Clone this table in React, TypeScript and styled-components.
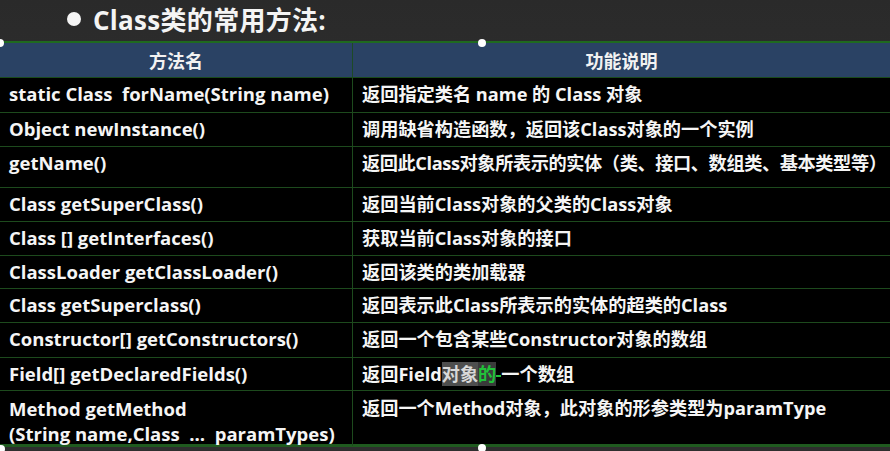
import React from "react";
import styled, { createGlobalStyle } from "styled-components";

const GlobalStyle = createGlobalStyle`
  html, body {
    margin: 0;
    padding: 0;
    background: #2c2c2c;
  }
  body {
    font-family: "Open Sans", "Noto Sans CJK SC", sans-serif;
  }
`;

const rows: { name: string; desc: string; h: number }[] = [
  { name: "static Class  forName(String name)", desc: "返回指定类名 name 的 Class 对象", h: 35 },
  { name: "Object newInstance()", desc: "调用缺省构造函数，返回该Class对象的一个实例", h: 34 },
  { name: "getName()", desc: "返回此Class对象所表示的实体（类、接口、数组类、基本类型等）", h: 41 },
  { name: "Class getSuperClass()", desc: "返回当前Class对象的父类的Class对象", h: 34 },
  { name: "Class [] getInterfaces()", desc: "获取当前Class对象的接口", h: 34 },
  { name: "ClassLoader getClassLoader()", desc: "返回该类的类加载器", h: 33 },
  { name: "Class getSuperclass()", desc: "返回表示此Class所表示的实体的超类的Class", h: 34 },
  { name: "Constructor[] getConstructors()", desc: "返回一个包含某些Constructor对象的数组", h: 35 },
  { name: "Field[] getDeclaredFields()", desc: "FIELD", h: 33 },
  {
    name: "Method getMethod\n(String name,Class  …  paramTypes)",
    desc: "返回一个Method对象，此对象的形参类型为paramType",
    h: 56,
  },
];

export default function App() {
  return (
    <Board>
      <GlobalStyle />
      <Title>
        <Bullet />
        Class类的常用方法:
      </Title>
      <Table>
        <HeadRow>
          <HeadCell>方法名</HeadCell>
          <HeadCell>功能说明</HeadCell>
        </HeadRow>
        {rows.map((r, i) => {
          const last = i === rows.length - 1;
          return (
            <Row key={i} $h={r.h} $last={last}>
              <NameCell $tall={last}>{r.name}</NameCell>
              <DescCell $tall={last} $tight={i === 2}>
                {r.desc === "FIELD" ? (
                  <>
                    返回Field<Selected>对象</Selected>
                    <Cursor>的</Cursor>
                    <Caret />一个数组
                  </>
                ) : (
                  r.desc
                )}
              </DescCell>
            </Row>
          );
        })}
      </Table>
      <Handle $x={0} $y={43} />
      <Handle $x={482} $y={43} />
      <Handle $x={482} $y={448} />
      <Handle $x={1} $y={449} />
    </Board>
  );
}

const Board = styled.div`
  position: relative;
  width: 890px;
  height: 451px;
  overflow: hidden;
  background: linear-gradient(180deg, #2a2a2a 0%, #333333 60%, #2e2e2e 100%);
`;

const Title = styled.div`
  height: 41px;
  display: flex;
  align-items: center;
  padding-left: 67px;
  padding-bottom: 3px;
  box-sizing: border-box;
  color: #f4f4f4;
  font-size: 26px;
  font-weight: 700;
  letter-spacing: 0.3px;
`;

const Bullet = styled.span`
  width: 14px;
  height: 14px;
  border-radius: 50%;
  background: #f4f4f4;
  margin-right: 12px;
`;

const Table = styled.div`
  display: flex;
  flex-direction: column;
  border-top: 2px solid #1f6a1f;
`;

const HeadRow = styled.div`
  display: grid;
  grid-template-columns: 352px 1fr;
  height: 34px;
  background: #2a4264;
  border-bottom: 1px solid #1a4a1a;
`;

const HeadCell = styled.div`
  display: flex;
  align-items: center;
  justify-content: center;
  color: #f2f2f2;
  font-size: 18px;
  font-weight: 700;
  & + & {
    border-left: 1px solid #1d4a26;
  }
`;

const Row = styled.div<{ $h: number; $last: boolean }>`
  display: grid;
  grid-template-columns: 352px 1fr;
  height: ${(p) => p.$h}px;
  box-sizing: border-box;
  background: #000;
  border-bottom: ${(p) => (p.$last ? "3px solid #1f5a1f" : "1px solid #1d4a1d")};
`;

const NameCell = styled.div<{ $tall: boolean }>`
  padding: 5px 0 0 9px;
  color: #f5f5f5;
  font-size: 18.5px;
  font-weight: 700;
  line-height: ${(p) => (p.$tall ? "25px" : "22px")};
  white-space: pre;
`;

const DescCell = styled.div<{ $tall: boolean; $tight: boolean }>`
  padding: 5px 0 0 9px;
  border-left: 1px solid #1d4a1d;
  color: #f5f5f5;
  font-size: 18.2px;
  font-weight: 700;
  line-height: ${(p) => (p.$tall ? "25px" : "22px")};
  letter-spacing: ${(p) => (p.$tight ? "-0.4px" : "0")};
  white-space: pre;
`;

const Selected = styled.span`
  background: #4e4e4e;
  color: #d8d8d8;
`;

const Cursor = styled.span`
  background: #3a3a3a;
  color: #22c23a;
`;

const Caret = styled.span`
  display: inline-block;
  width: 5px;
  height: 2px;
  background: #22c23a;
  vertical-align: middle;
`;

const Handle = styled.span<{ $x: number; $y: number }>`
  position: absolute;
  left: ${(p) => p.$x - 4}px;
  top: ${(p) => p.$y - 4}px;
  width: 8px;
  height: 8px;
  border-radius: 50%;
  background: #fff;
`;
